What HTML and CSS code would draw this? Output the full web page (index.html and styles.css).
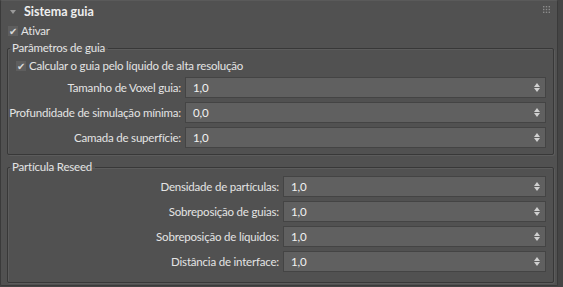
FILE: index.html
```html
<!DOCTYPE html>
<html lang="pt">
<head>
    <meta charset="UTF-8">
    <title>Sistema guia</title>
    <link rel="stylesheet" href="styles.css">
</head>
<body>
    <div class="rollout">
        <div class="rollout-head">
            <span class="caret"></span>
            <span class="rollout-title">Sistema guia</span>
            <svg class="grip" width="7" height="7" viewBox="0 0 7 7">
                <rect x="0" y="0" width="1.4" height="1.4"/><rect x="2.8" y="0" width="1.4" height="1.4"/><rect x="5.6" y="0" width="1.4" height="1.4"/>
                <rect x="0" y="2.8" width="1.4" height="1.4"/><rect x="2.8" y="2.8" width="1.4" height="1.4"/><rect x="5.6" y="2.8" width="1.4" height="1.4"/>
                <rect x="0" y="5.6" width="1.4" height="1.4"/><rect x="2.8" y="5.6" width="1.4" height="1.4"/><rect x="5.6" y="5.6" width="1.4" height="1.4"/>
            </svg>
        </div>
        <label class="check"><span class="box">&#10004;</span>Ativar</label>

        <fieldset class="group group-guide">
            <legend>Parâmetros de guia</legend>
            <label class="check"><span class="box">&#10004;</span>Calcular o guia pelo líquido de alta resolução</label>
            <div class="row"><span class="lbl">Tamanho de Voxel guia:</span><div class="spin">1,0<span class="arrows"></span></div></div>
            <div class="row"><span class="lbl">Profundidade de simulação mínima:</span><div class="spin">0,0<span class="arrows"></span></div></div>
            <div class="row"><span class="lbl">Camada de superfície:</span><div class="spin">1,0<span class="arrows"></span></div></div>
        </fieldset>

        <fieldset class="group group-reseed">
            <legend>Partícula Reseed</legend>
            <div class="row"><span class="lbl">Densidade de partículas:</span><div class="spin">1,0<span class="arrows"></span></div></div>
            <div class="row"><span class="lbl">Sobreposição de guias:</span><div class="spin">1,0<span class="arrows"></span></div></div>
            <div class="row"><span class="lbl">Sobreposição de líquidos:</span><div class="spin">1,0<span class="arrows"></span></div></div>
            <div class="row"><span class="lbl">Distância de interface:</span><div class="spin">1,0<span class="arrows"></span></div></div>
        </fieldset>
    </div>
</body>
</html>
```

FILE: styles.css
```css
body {
    margin: 0;
    background-color: #454545;
    font-family: Lato, "Noto Sans", sans-serif;
    font-size: 11.5px;
    letter-spacing: -0.2px;
    color: #e4e4e4;
}
.rollout {
    width: 558px;
    height: 286px;
    box-sizing: border-box;
    background-color: #515151;
    border: 1px solid #3a3a3a;
    border-top-color: #5a5a5a;
    border-radius: 2px;
    padding: 0 3px 0 6px;
}
.rollout-head {
    display: flex;
    align-items: center;
    height: 21px;
}
.caret {
    width: 0;
    height: 0;
    border-left: 3px solid transparent;
    border-right: 3px solid transparent;
    border-top: 4px solid #9a9a9a;
    margin: 0 8px 0 3px;
}
.rollout-title {
    font-weight: bold;
    font-size: 12.5px;
    letter-spacing: 0;
    color: #eeeeee;
    flex: 1;
}
.grip {
    fill: #8c8c8c;
    margin: 0 4px 4px 0;
}
.check {
    display: flex;
    align-items: center;
    height: 18px;
    line-height: 18px;
}
.box {
    width: 10px;
    height: 10px;
    margin: 0 3px 0 1px;
    background-color: #5e5e5e;
    color: #d8d8d8;
    font-size: 10px;
    line-height: 10px;
    text-align: center;
}
.group {
    margin: 0;
    border: 1px solid #383838;
    box-shadow: 1px 1px 0 #5c5c5c, inset 1px 1px 0 #5c5c5c;
    border-radius: 2px;
    padding: 0 7px 0 0;
    box-sizing: border-box;
}
.group legend {
    padding: 0 3px 0 2px;
    margin-left: 2px;
    line-height: 16px;
}
.group-guide {
    height: 115px;
}
.group-reseed {
    margin-top: 4px;
    height: 124px;
}
.group-guide .check {
    margin: 1px 0 2px 7px;
}
.row {
    display: grid;
    align-items: center;
    height: 21px;
    margin-bottom: 4px;
}
.group-guide .row {
    grid-template-columns: 177px 1fr;
}
.group-reseed .row {
    grid-template-columns: 275px 1fr;
}
.group-reseed .row:first-of-type {
    margin-top: 1px;
}
.lbl {
    display: flex;
    justify-content: flex-end;
    padding-right: 4px;
    white-space: nowrap;
    min-width: 0;
}
.spin {
    position: relative;
    height: 21px;
    box-sizing: border-box;
    background-color: #606060;
    border: 1px solid #444444;
    line-height: 19px;
    padding-left: 7px;
    color: #f2f2f2;
}
.arrows {
    position: absolute;
    right: 4px;
    top: 5px;
    width: 7px;
    height: 9px;
}
.arrows::before,
.arrows::after {
    content: "";
    position: absolute;
    left: 0;
    border-left: 3.5px solid transparent;
    border-right: 3.5px solid transparent;
}
.arrows::before {
    top: 0;
    border-bottom: 4px solid #d0d0d0;
}
.arrows::after {
    bottom: 0;
    border-top: 4px solid #d0d0d0;
}
```
